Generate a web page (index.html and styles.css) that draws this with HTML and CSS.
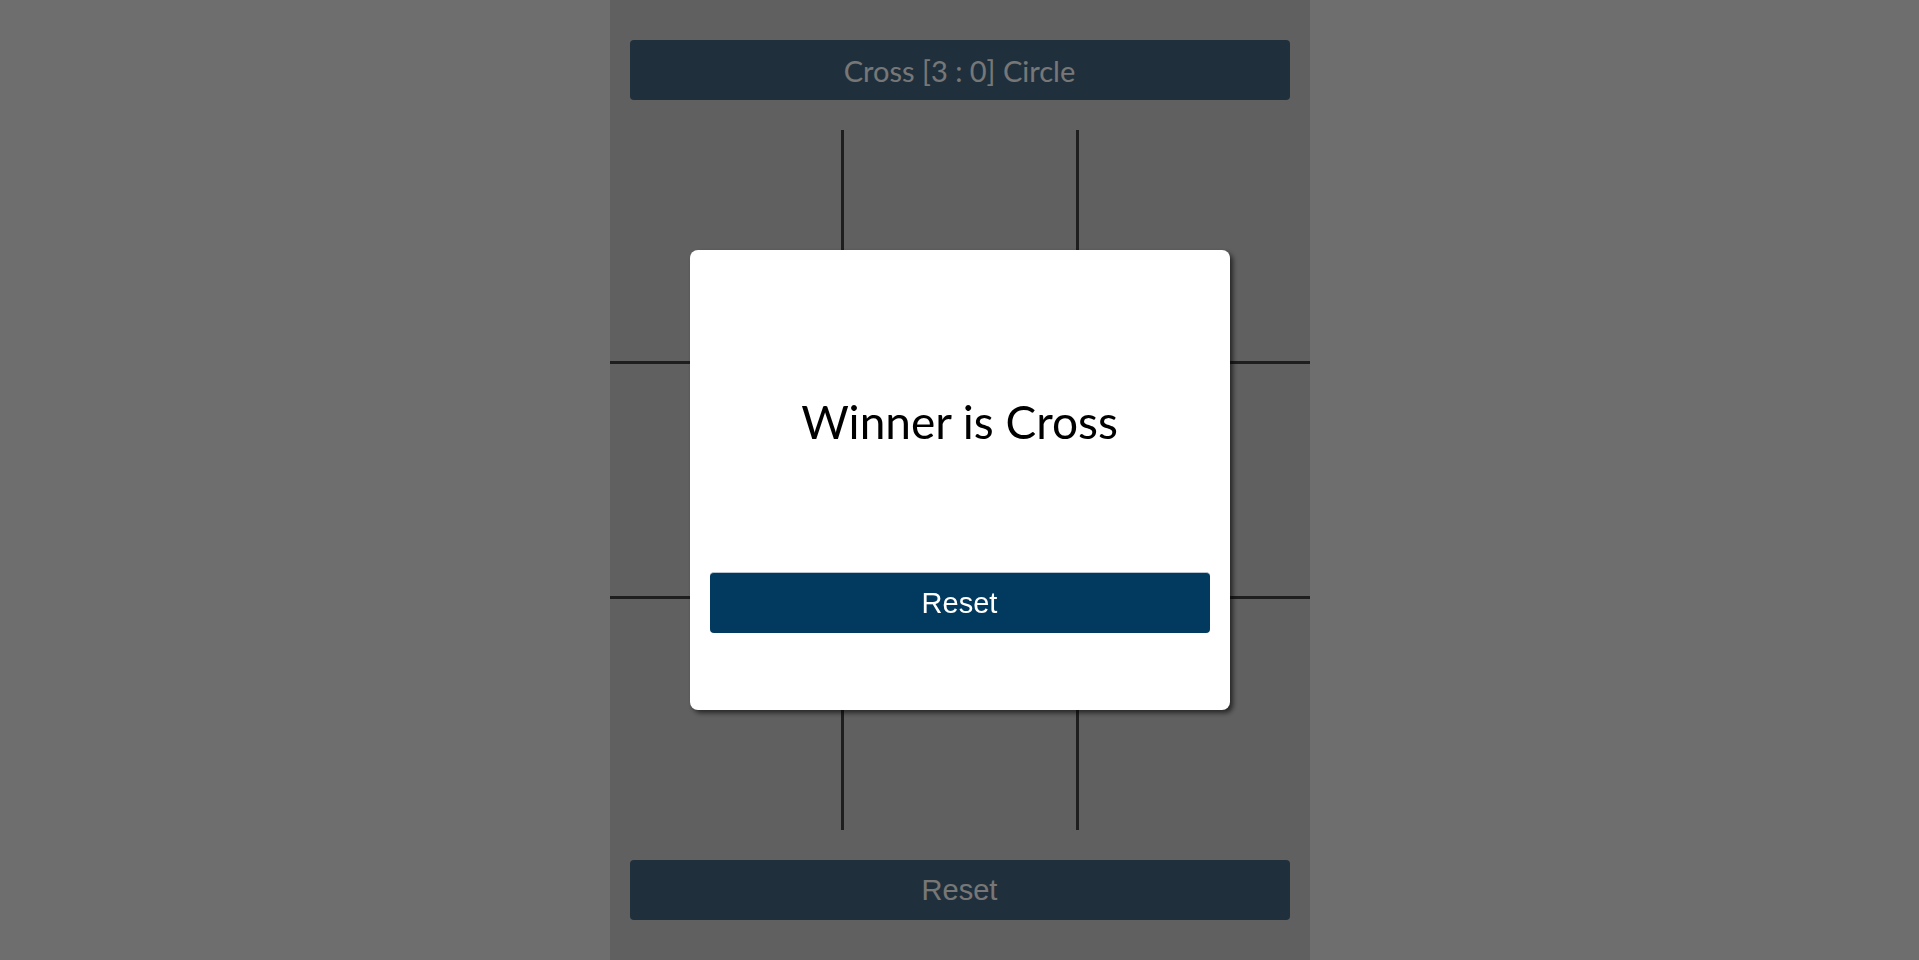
FILE: index.html
```html
<!DOCTYPE html>
<html lang="en">
<head>
<meta charset="utf-8">
<title>Tic Tac Toe</title>
<link rel="stylesheet" href="styles.css">
</head>
<body>
<main class="game">
  <header class="score">Cross [3 : 0] Circle</header>
  <section class="board">
    <div class="cell"></div><div class="cell"></div><div class="cell"></div>
    <div class="cell"></div><div class="cell"></div><div class="cell"></div>
    <div class="cell"></div><div class="cell"></div><div class="cell"></div>
  </section>
  <button class="reset-bar" type="button">Reset</button>
</main>
<div class="overlay">
  <div class="modal">
    <div class="message">Winner is Cross</div>
    <button class="modal-reset" type="button">Reset</button>
  </div>
</div>
</body>
</html>
```

FILE: styles.css
```css
html, body {
  margin: 0;
  padding: 0;
  height: 100%;
}

body {
  background: #dcdcdc;
  font-family: Lato, "Open Sans", sans-serif;
  overflow: hidden;
}

.game {
  width: 700px;
  height: 960px;
  margin: 0 auto;
  background: #c0c0c0;
  box-sizing: border-box;
  padding: 40px 20px;
  display: flex;
  flex-direction: column;
  gap: 30px;
}

.score {
  height: 60px;
  flex: none;
  background: #3e5e76;
  color: #efefef;
  border-radius: 4px;
  display: flex;
  align-items: center;
  justify-content: center;
  font-size: 29px;
}

.board {
  height: 700px;
  margin: 0 -20px;
  display: grid;
  grid-template-columns: 231px 232px 231px;
  grid-template-rows: 231px 232px 231px;
  gap: 3px;
  background: #3c3c3c;
  flex: none;
}

.cell {
  background: #c0c0c0;
}

.reset-bar {
  height: 60px;
  flex: none;
  border: none;
  background: #3e5e76;
  color: #efefef;
  border-radius: 4px;
  font-family: "Liberation Sans", Arial, sans-serif;
  font-size: 29px;
  padding: 0;
}

.overlay {
  position: fixed;
  inset: 0;
  background: rgba(0, 0, 0, 0.5);
  display: flex;
  align-items: center;
  justify-content: center;
}

.modal {
  width: 540px;
  height: 460px;
  box-sizing: border-box;
  background: #ffffff;
  border-radius: 8px;
  box-shadow: 3px 3px 5px rgba(0, 0, 0, 0.6);
  padding: 20px 20px 77px;
  display: flex;
  flex-direction: column;
}

.message {
  flex: 1;
  display: flex;
  align-items: center;
  justify-content: center;
  font-size: 46px;
  color: #000;
}

.modal-reset {
  height: 61px;
  flex: none;
  border: none;
  border-top: 1px solid #b8c4cf;
  background: #023a5f;
  color: #ffffff;
  border-radius: 4px;
  font-family: "Liberation Sans", Arial, sans-serif;
  font-size: 29px;
  padding: 0;
}
```
